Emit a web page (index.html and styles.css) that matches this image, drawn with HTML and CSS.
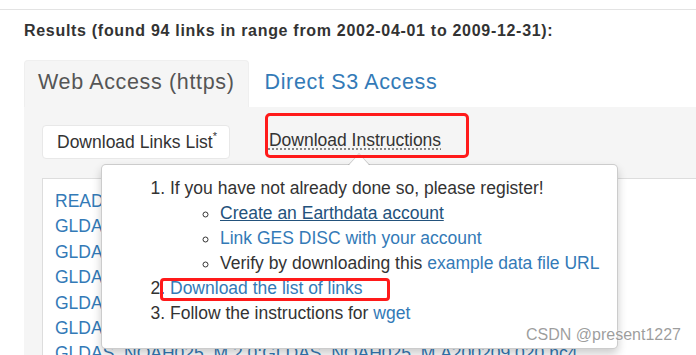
FILE: index.html
```html
<!DOCTYPE html>
<html lang="en">
<head>
    <meta charset="UTF-8">
    <meta name="viewport" content="width=device-width, initial-scale=1.0">
    <title>Download Links</title>
    <link rel="stylesheet" href="styles.css">
</head>
<body>

    <div class="topbar"></div>

    <div class="results">
        <h4 class="results-title">Results (found 94 links in range from 2002-04-01 to 2009-12-31):</h4>

        <ul class="tabs">
            <li class="tab active">Web Access (https)</li>
            <li class="tab"><a href="#">Direct S3 Access</a></li>
        </ul>

        <div class="tab-pane">
            <div class="toolbar">
                <button class="btn">Download Links List<sup>*</sup></button>
                <a class="instructions" href="#">Download Instructions</a>
            </div>

            <div class="link-list">
                <a href="#">README Document</a>
                <a href="#">GLDAS_NOAH025_M.2.0:GLDAS_NOAH025_M.A200204.020.nc4</a>
                <a href="#">GLDAS_NOAH025_M.2.0:GLDAS_NOAH025_M.A200205.020.nc4</a>
                <a href="#">GLDAS_NOAH025_M.2.0:GLDAS_NOAH025_M.A200206.020.nc4</a>
                <a href="#">GLDAS_NOAH025_M.2.0:GLDAS_NOAH025_M.A200207.020.nc4</a>
                <a href="#">GLDAS_NOAH025_M.2.0:GLDAS_NOAH025_M.A200208.020.nc4</a>
                <a href="#">GLDAS_NOAH025_M.2.0:GLDAS_NOAH025_M.A200209.020.nc4</a>
            </div>

            <div class="popover">
                <div class="arrow"></div>
                <ol class="steps">
                    <li>If you have not already done so, please register!
                        <ul class="substeps">
                            <li><a class="hover" href="#">Create an Earthdata account</a></li>
                            <li><a href="#">Link GES DISC with your account</a></li>
                            <li>Verify by downloading this <a href="#">example data file URL</a></li>
                        </ul>
                    </li>
                    <li><a href="#">Download the list of links</a></li>
                    <li>Follow the instructions for <a href="#">wget</a></li>
                </ol>
            </div>
        </div>
    </div>

    <!-- red marks drawn over the screenshot -->
    <div class="mark mark-instructions"></div>
    <div class="mark mark-list"></div>
    <div class="watermark">CSDN @present1227</div>

</body>
</html>
```

FILE: styles.css
```css
body {
    margin: 0;
    background-color: #fff;
    color: #333;
    font-family: 'Liberation Sans', Arial, sans-serif;
    overflow: hidden;
}

a {
    color: #337ab7;
    text-decoration: none;
}

.topbar {
    height: 9px;
    border-bottom: 1px solid #e3e3e3;
}

.results {
    padding-left: 24px;
}

.results-title {
    margin: 12px 0 20px;
    font-size: 16px;
    line-height: 18px;
    letter-spacing: 0.7px;
    font-weight: bold;
}

.tabs {
    display: flex;
    margin: 0;
    padding: 0;
    list-style: none;
}

.tab {
    padding: 8px 13px 12px;
    margin-right: 2px;
    font-size: 21.5px;
    line-height: 26px;
    letter-spacing: 0.65px;
    border: 1px solid transparent;
    border-bottom: none;
    border-radius: 4px 4px 0 0;
}

.tab.active {
    color: #555;
    background-color: #f5f5f5;
    border-color: #efefef;
}

.tab-pane {
    position: relative;
    background-color: #f5f5f5;
    padding: 18px 0 0 18px;
    height: 231px;
    overflow: hidden;
}

.toolbar {
    display: flex;
    align-items: flex-start;
    margin-bottom: 19px;
}

.btn {
    font-family: inherit;
    font-size: 17.5px;
    line-height: 20px;
    color: #333;
    background-color: #fff;
    border: 1px solid #e8e8e8;
    border-radius: 4px;
    padding: 6px 12px 6px 14px;
}

.btn sup {
    font-size: 11px;
    line-height: 0;
    vertical-align: 8px;
}

.instructions {
    margin-left: 39px;
    padding-top: 5px;
    font-size: 17.5px;
    line-height: 20px;
    color: #333;
    text-decoration: underline dotted #777;
    text-underline-offset: 3px;
}

.link-list {
    display: flex;
    flex-direction: column;
    align-items: flex-start;
    background-color: #fff;
    border: 1px solid #ddd;
    border-right: none;
    padding: 10px 12px;
    font-size: 17.5px;
    line-height: 25.4px;
    white-space: nowrap;
}

.popover {
    position: absolute;
    left: 77px;
    top: 57px;
    width: 515px;
    background-color: #fff;
    border: 1px solid rgba(0, 0, 0, 0.2);
    border-radius: 5px;
    box-shadow: 0 5px 10px rgba(0, 0, 0, 0.2);
    font-size: 17.5px;
    line-height: 25px;
}

.arrow {
    position: absolute;
    left: 246px;
    top: -12px;
    width: 0;
    height: 0;
    border: 11px solid transparent;
    border-top: none;
    border-bottom: 12px solid rgba(0, 0, 0, 0.18);
}

.arrow::after {
    content: '';
    position: absolute;
    left: -10px;
    top: 1px;
    border: 10px solid transparent;
    border-top: none;
    border-bottom: 11px solid #fff;
}

.steps {
    margin: 0;
    padding: 11px 14px 22px 68px;
}

.substeps {
    list-style: circle;
    margin: 0;
    padding-left: 50px;
}

a.hover {
    color: #23527c;
    text-decoration: underline;
}

.mark {
    position: absolute;
    border: 3px solid #ff1a1a;
    border-radius: 5px;
}

.mark-instructions {
    left: 265px;
    top: 113px;
    width: 198px;
    height: 39px;
}

.mark-list {
    left: 160px;
    top: 278px;
    width: 224px;
    height: 17px;
    border-radius: 4px;
}

.watermark {
    position: absolute;
    right: 15px;
    top: 326px;
    font-size: 16px;
    color: rgba(125, 125, 125, 0.75);
    text-shadow: 0 0 2px #fff;
}
```
